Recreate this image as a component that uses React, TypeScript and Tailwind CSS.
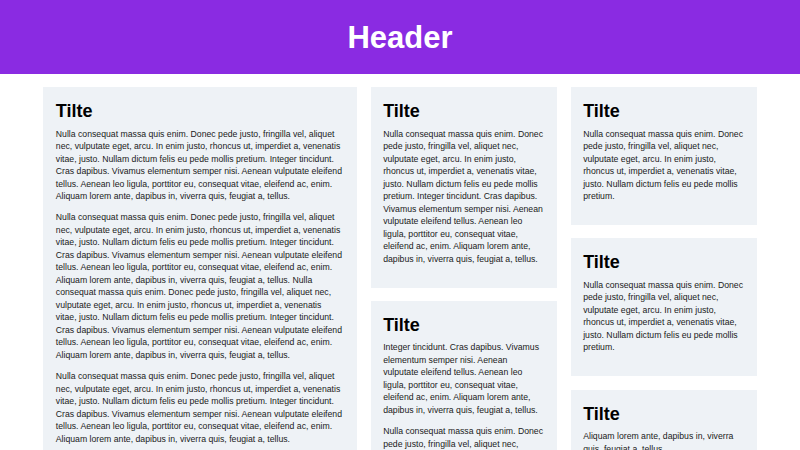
import React from "react";

const P1 =
  "Nulla consequat massa quis enim. Donec pede justo, fringilla vel, aliquet nec, vulputate eget, arcu. In enim justo, rhoncus ut, imperdiet a, venenatis vitae, justo. Nullam dictum felis eu pede mollis pretium. Integer tincidunt. Cras dapibus. Vivamus elementum semper nisi. Aenean vulputate eleifend tellus. Aenean leo ligula, porttitor eu, consequat vitae, eleifend ac, enim. Aliquam lorem ante, dapibus in, viverra quis, feugiat a, tellus.";
const P2 = P1 + " " + P1;
const P3 =
  "Integer tincidunt. Cras dapibus. Vivamus elementum semper nisi. Aenean vulputate eleifend tellus. Aenean leo ligula, porttitor eu, consequat vitae, eleifend ac, enim. Aliquam lorem ante, dapibus in, viverra quis, feugiat a, tellus.";
const P4 =
  "Nulla consequat massa quis enim. Donec pede justo, fringilla vel, aliquet nec, vulputate eget, arcu. In enim justo, rhoncus ut, imperdiet a, venenatis vitae, justo. Nullam dictum felis eu pede mollis pretium.";
const P5 = "Aliquam lorem ante, dapibus in, viverra quis, feugiat a, tellus.";

function Card({ paras }: { paras: string[] }) {
  return (
    <div className="bg-[#eef2f6] pt-[14px] px-[12.5px] pb-[13.7px]">
      <h2 className="text-[18px] leading-[21.6px] font-bold text-black mb-[4.8px]">Tilte</h2>
      {paras.map((p, i) => (
        <p key={i} className="text-[8.7px] leading-[12.5px] text-[#1a1a1a] mb-[8.8px]">
          {p}
        </p>
      ))}
    </div>
  );
}

export default function App() {
  return (
    <div className="bg-white min-h-screen" style={{ fontFamily: '"Liberation Sans", Arial, sans-serif' }}>
      <header className="h-[74px] bg-[#8a2be2] flex items-center justify-center pt-[1.5px]">
        <h1 className="text-[31px] font-bold text-white">Header</h1>
      </header>
      <main className="w-[713.4px] mx-auto mt-[13.3px] grid grid-cols-[313.4px_186px_186px] gap-x-[14px] items-start">
        <div className="flex flex-col gap-[13.3px]">
          <Card paras={[P1, P2, P1, P1]} />
        </div>
        <div className="flex flex-col gap-[13.3px]">
          <Card paras={[P1]} />
          <Card paras={[P3, P1]} />
        </div>
        <div className="flex flex-col gap-[13.3px]">
          <Card paras={[P4]} />
          <Card paras={[P4]} />
          <Card paras={[P5]} />
        </div>
      </main>
    </div>
  );
}
